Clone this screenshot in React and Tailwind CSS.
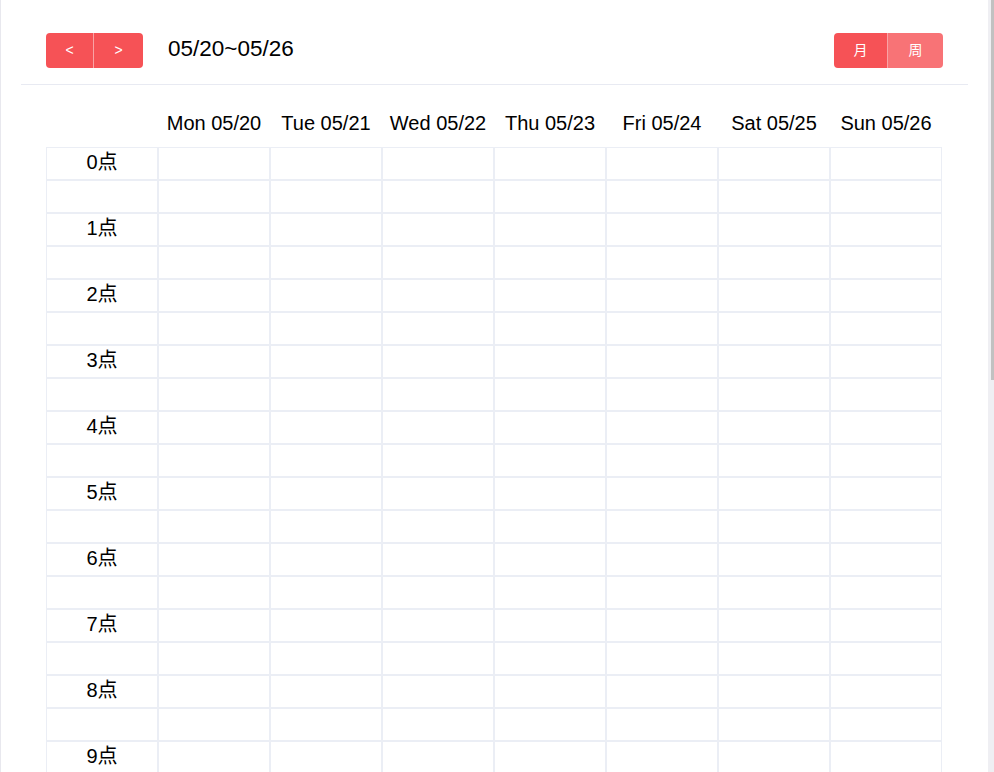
import { useState } from 'react';

const days = ['Mon 05/20', 'Tue 05/21', 'Wed 05/22', 'Thu 05/23', 'Fri 05/24', 'Sat 05/25', 'Sun 05/26'];

const slots = [];
for (let h = 0; h < 24; h++) {
  slots.push(`${h}点`);
  slots.push('');
}

export default function App() {
  const [mode, setMode] = useState('week');

  return (
    <div className="h-screen flex overflow-hidden bg-white text-black font-['Liberation_Sans','Noto_Sans_CJK_SC',sans-serif]">
      <div className="flex-1 overflow-y-auto [scrollbar-width:none] [&::-webkit-scrollbar]:hidden">
        <div className="min-h-full border-l border-[#e8e8ee] px-[20px]">
          <div className="flex items-center justify-between px-[25px] pt-[33px] pb-[16px] border-b border-[#e8eaf2]">
            <div className="flex items-center">
              <div className="flex h-[35px] rounded-[4px] overflow-hidden">
                <button className="w-[48px] bg-[#f65256] text-white text-[14px] border-r border-[#f9a3a5]">&lt;</button>
                <button className="w-[49px] bg-[#f65256] text-white text-[14px]">&gt;</button>
              </div>
              <div className="ml-[25px] mb-[2px] text-[22.5px] leading-none">05/20~05/26</div>
            </div>
            <div className="flex h-[35px] rounded-[4px] overflow-hidden">
              <button
                onClick={() => setMode('month')}
                className="w-[54px] bg-[#f65256] text-white text-[14px] border-r border-[#f9a3a5]"
              >
                月
              </button>
              <button
                onClick={() => setMode('week')}
                className={mode === 'week' ? 'w-[55px] bg-[#f87376] text-white text-[14px]' : 'w-[55px] bg-[#f87376] text-white text-[14px]'}
              >
                周
              </button>
            </div>
          </div>

          <div className="pl-[25px] pt-[15px]">
            <div className="grid grid-cols-8 w-[896px] h-[47px] items-center pb-[2px] text-[20px]">
              <div />
              {days.map((d) => (
                <div key={d} className="text-center whitespace-nowrap">{d}</div>
              ))}
            </div>
            <div className="grid grid-cols-8 w-[896px] text-[20px]">
              {slots.map((label, i) => (
                <>
                  <div key={`l${i}`} className="h-[33px] border border-[#ebeef5] flex items-center justify-center pb-[3px] leading-none">
                    {label}
                  </div>
                  {days.map((d) => (
                    <div key={`${d}${i}`} className="h-[33px] border border-[#ebeef5]" />
                  ))}
                </>
              ))}
            </div>
          </div>
        </div>
      </div>
      {/* scrollbar */}
      <div className="w-[6px] shrink-0 bg-[#efeff3] flex justify-end">
        <div className="w-[3px] h-[380px] bg-[#c1c1c1]" />
      </div>
    </div>
  );
}
